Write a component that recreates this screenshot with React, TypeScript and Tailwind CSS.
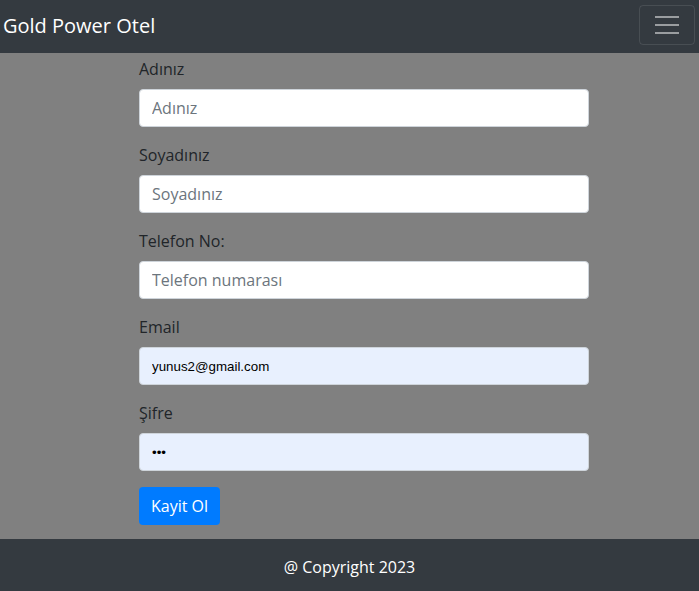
import React from "react";

const font = { fontFamily: "'Open Sans', 'Noto Sans', sans-serif" };

function Field({ label, placeholder, value, type = "text", autofill = false }: { label: string; placeholder: string; value?: string; type?: string; autofill?: boolean }) {
  return (
    <div className="mb-4">
      <label className="block mb-2 text-[16px] leading-6 text-[#212529]">{label}</label>
      {autofill ? (
        <input
          type={type}
          readOnly
          value={value}
          className="block w-full h-[38px] px-3 rounded border border-[#ced4da] bg-[#e8f0fe] text-black text-[13.333px] outline-none [font-family:'Liberation_Sans',Arial,sans-serif]"
        />
      ) : (
        <input
          type={type}
          placeholder={placeholder}
          className="block w-full h-[38px] px-3 rounded border border-[#ced4da] bg-white text-[16px] text-[#495057] placeholder:text-[#6c757d] outline-none"
        />
      )}
    </div>
  );
}

export default function App() {
  return (
    <div className="min-h-[591px] flex flex-col bg-[#808080]" style={font}>
      <nav className="h-[53px] bg-[#343a40] flex items-start justify-between pl-[3px] pr-[4px]">
        <span className="text-white text-[20px] leading-[30px] mt-[11px]">Gold Power Otel</span>
        <button className="mt-[5px] w-[56px] h-[40px] rounded border border-white/10 flex flex-col items-center justify-center gap-[6px]">
          <span className="block w-[24px] h-[2px] bg-white/50" />
          <span className="block w-[24px] h-[2px] bg-white/50" />
          <span className="block w-[24px] h-[2px] bg-white/50" />
        </button>
      </nav>
      <main className="flex-1 pl-[139px] pt-[4px]">
        <form className="w-[450px]">
          <Field label="Adınız" placeholder="Adınız" />
          <Field label="Soyadınız" placeholder="Soyadınız" />
          <Field label="Telefon No:" placeholder="Telefon numarası" />
          <Field label="Email" placeholder="Email" value="yunus2@gmail.com" autofill />
          <Field label="Şifre" placeholder="Şifre" value="abc" type="password" autofill />
          <button type="button" className="h-[38px] px-3 rounded bg-[#007bff] text-white text-[16px] leading-6">Kayit Ol</button>
        </form>
      </main>
      <footer className="mt-[14px] h-[52px] bg-[#343a40] flex items-center justify-center">
        <span className="text-white text-[16px] leading-6 mt-[4px]">@ Copyright 2023</span>
      </footer>
    </div>
  );
}
